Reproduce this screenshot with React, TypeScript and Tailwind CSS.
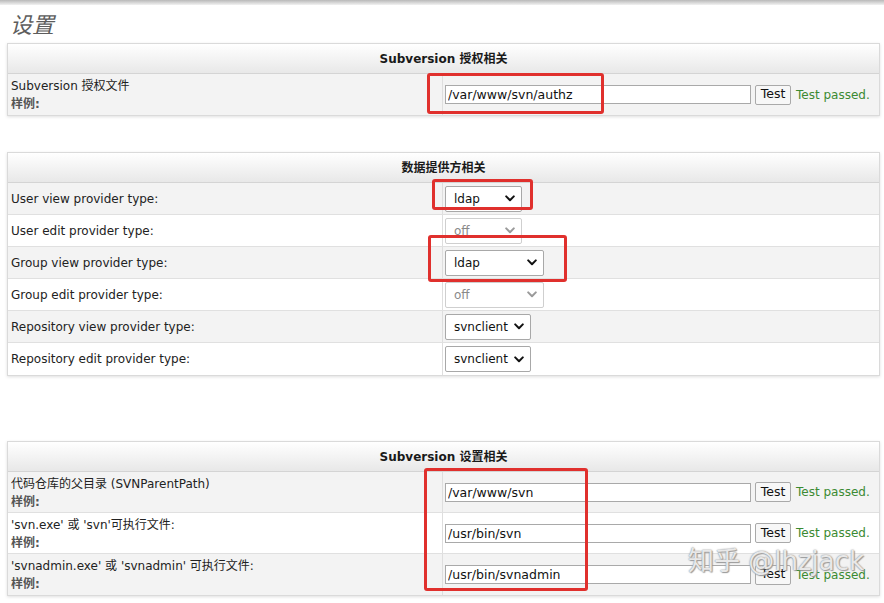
import React from "react";

type SelectProps = { value: string; width: string; disabled?: boolean };

const Chevron: React.FC<{ faded?: boolean }> = ({ faded }) => (
  <svg width="10" height="7" viewBox="0 0 10 7" className="shrink-0">
    <path
      d="M1.2 1.4 L5 5.2 L8.8 1.4"
      fill="none"
      stroke={faded ? "#9a9a9a" : "#111"}
      strokeWidth="2"
      strokeLinecap="round"
      strokeLinejoin="round"
    />
  </svg>
);

const FakeSelect: React.FC<SelectProps> = ({ value, width, disabled }) => (
  <div
    className={`${width} h-[26px] flex items-center justify-between pl-[8px] pr-[6px] rounded-[2px] border bg-white text-[12px] ${
      disabled ? "border-[#cfcfcf] text-[#8a8a8a]" : "border-[#a8a8a8] text-[#111]"
    }`}
  >
    <span>{value}</span>
    <Chevron faded={disabled} />
  </div>
);

const PathField: React.FC<{ value: string }> = ({ value }) => (
  <div className="flex items-center">
    <input
      readOnly
      value={value}
      className="w-[306px] h-[19px] border border-[#a9a9a9] px-[2px] text-[12.5px] text-[#111] bg-white outline-none"
    />
    <button className="ml-[4px] h-[20px] w-[36px] border border-[#a9a9a9] rounded-[2px] bg-[#f7f7f7] text-[12.5px] text-[#111] leading-none">
      Test
    </button>
    <span className="ml-[5px] text-[12px] text-[#3b8a32]">Test passed.</span>
  </div>
);

const Table: React.FC<{ title: string; children: React.ReactNode; className?: string }> = ({
  title,
  children,
  className,
}) => (
  <div className={`mx-[7px] w-[873px] border border-[#dadada] shadow-[0_1px_3px_rgba(0,0,0,0.13)] ${className ?? ""}`}>
    <div className="h-[30px] flex items-center justify-center bg-linear-to-b from-white to-[#e8e8e8] border-b border-[#d4d4d4] font-bold text-[12px] text-[#1a1a1a]">
      {title}
    </div>
    {children}
  </div>
);

const Row: React.FC<{ label: React.ReactNode; gray?: boolean; tall?: boolean; children: React.ReactNode }> = ({
  label,
  gray,
  tall,
  children,
}) => (
  <div
    className={`grid grid-cols-[435px_1fr] border-b border-[#e0e0e0] last:border-b-0 ${tall ? "h-[41px]" : "h-[32px]"} ${
      gray ? "bg-[#f3f3f3]" : "bg-white"
    }`}
  >
    <div className={`pl-[3px] border-r border-[#dedede] text-[12px] text-[#222] ${tall ? "pt-[3px]" : "flex items-center"}`}>
      {label}
    </div>
    <div className="pl-[2px] flex items-center">{children}</div>
  </div>
);

const TwoLine: React.FC<{ text: string }> = ({ text }) => (
  <div className="leading-[18px]">
    <div>{text}</div>
    <div className="font-bold text-[#555]">样例:</div>
  </div>
);

const RedBox: React.FC<{ className: string }> = ({ className }) => (
  <div className={`absolute border-[3px] border-[#e0302d] rounded-[3px] pointer-events-none ${className}`} />
);

export default function App() {
  return (
    <div
      className="relative w-[884px] h-[603px] overflow-hidden bg-white"
      style={{ fontFamily: '"DejaVu Sans", "Noto Sans CJK SC", sans-serif' }}
    >
      <div className="h-[5px] bg-linear-to-b from-[#b9b9b9] to-[#f2f2f2]" />
      <div className="h-[38px] pl-[10px] pt-[3px] flex items-center text-[22px] italic text-[#5d5d5d] leading-none">设置</div>

      <Table title="Subversion 授权相关">
        <Row tall gray label={<TwoLine text="Subversion 授权文件" />}>
          <PathField value="/var/www/svn/authz" />
        </Row>
      </Table>

      <Table title="数据提供方相关" className="mt-[36px]">
        <Row gray label="User view provider type:">
          <FakeSelect value="ldap" width="w-[77px]" />
        </Row>
        <Row label="User edit provider type:">
          <FakeSelect value="off" width="w-[77px]" disabled />
        </Row>
        <Row gray label="Group view provider type:">
          <FakeSelect value="ldap" width="w-[99px]" />
        </Row>
        <Row label="Group edit provider type:">
          <FakeSelect value="off" width="w-[99px]" disabled />
        </Row>
        <Row gray label="Repository view provider type:">
          <FakeSelect value="svnclient" width="w-[86px]" />
        </Row>
        <Row label="Repository edit provider type:">
          <FakeSelect value="svnclient" width="w-[86px]" />
        </Row>
      </Table>

      <Table title="Subversion 设置相关" className="mt-[65px]">
        <Row tall gray label={<TwoLine text="代码仓库的父目录 (SVNParentPath)" />}>
          <PathField value="/var/www/svn" />
        </Row>
        <Row tall label={<TwoLine text="'svn.exe' 或 'svn'可执行文件:" />}>
          <PathField value="/usr/bin/svn" />
        </Row>
        <Row tall gray label={<TwoLine text="'svnadmin.exe' 或 'svnadmin' 可执行文件:" />}>
          <PathField value="/usr/bin/svnadmin" />
        </Row>
      </Table>

      <RedBox className="left-[427px] top-[73px] w-[177px] h-[41px]" />
      <RedBox className="left-[432px] top-[179px] w-[101px] h-[31px]" />
      <RedBox className="left-[428px] top-[235px] w-[139px] h-[47px]" />
      <RedBox className="left-[424px] top-[468px] w-[164px] h-[123px]" />

      <div
        className="absolute left-[688px] top-[548px] text-[26px] text-white/80 leading-none whitespace-nowrap"
        style={{ textShadow: "0 0 1px #888, 0 0 2px #aaa, 1px 1px 1px #999" }}
      >
        知乎 @lhzjack
      </div>
    </div>
  );
}
